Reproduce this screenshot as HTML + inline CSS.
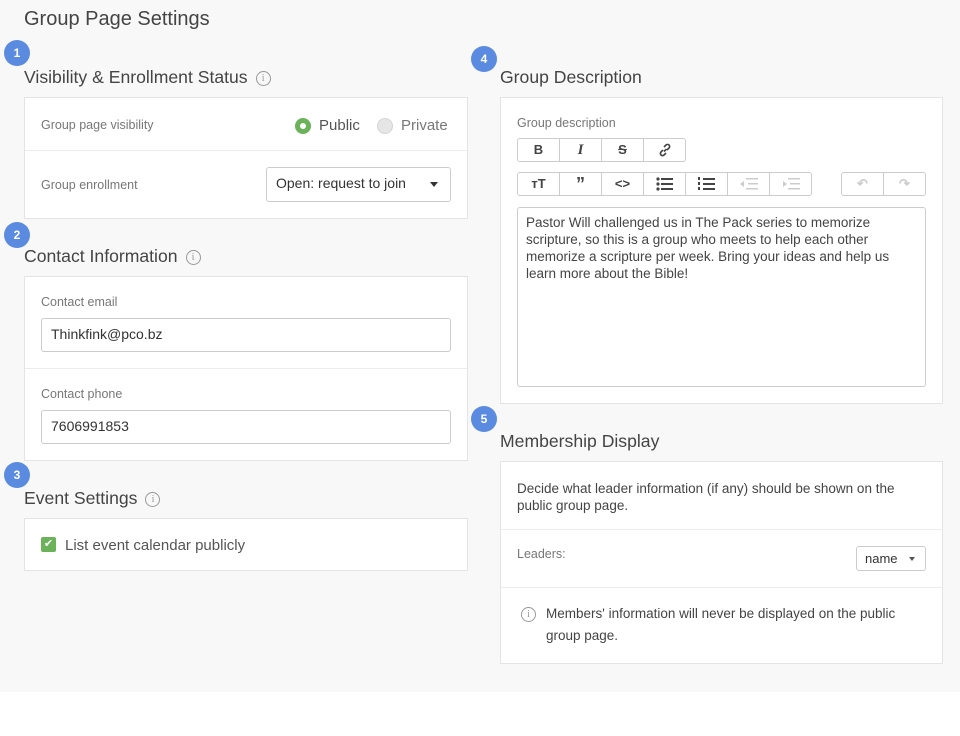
<!DOCTYPE html>
<html><head><style>
*{box-sizing:border-box;margin:0;padding:0}
body{width:960px;height:736px;background:#fff;font-family:"Liberation Sans",sans-serif;color:#444;position:relative;overflow:hidden}
.bg{position:absolute;left:0;top:0;width:960px;height:692px;background:#f8f8f8}
.a{position:absolute}
.badge{position:absolute;width:26px;height:26px;border-radius:50%;background:#5b8be0;color:#fff;font-size:12px;font-weight:bold;text-align:center;line-height:26px}
h1{position:absolute;font-weight:normal;font-size:20px;color:#444}
h2{position:absolute;font-weight:normal;font-size:17.6px;color:#444;white-space:nowrap}
.info{display:inline-block;width:15px;height:15px;border:1px solid #999;border-radius:50%;font-size:10px;color:#999;text-align:center;line-height:13px;vertical-align:2px;margin-left:8px;font-family:"Liberation Serif",serif}
.card{position:absolute;background:#fff;border:1px solid #e4e4e4}
.lbl{position:absolute;font-size:12.5px;color:#777}
.hr{position:absolute;left:0;right:0;height:1px;background:#ececec}
.inp{position:absolute;border:1px solid #ccc;border-radius:3px;background:#fff;font-size:14px;color:#333;padding-left:9px;line-height:31px}
.tb{position:absolute;height:24px;border:1px solid #ccc;border-radius:3px;display:flex;background:#fff}
.tb div{width:42px;border-right:1px solid #ccc;text-align:center;font-size:13px;line-height:22px;color:#444;font-weight:bold;display:flex;align-items:center;justify-content:center}
.tb div:last-child{border-right:none;width:41px}
.txt{font-size:14px;color:#444;line-height:17px}
</style></head><body>
<div class="bg"></div>
<h1 style="left:24px;top:8px">Group Page Settings</h1>

<div class="badge" style="left:4px;top:40px">1</div>
<h2 style="left:24px;top:67px">Visibility &amp; Enrollment Status<span class="info">i</span></h2>
<div class="card" style="left:24px;top:97px;width:444px;height:122px">
  <div class="lbl" style="left:16px;top:20px">Group page visibility</div>
  <div class="a" style="left:270px;top:20px;width:16px;height:16px;border-radius:50%;background:#6bb25a"><div class="a" style="left:5px;top:5px;width:6px;height:6px;border-radius:50%;background:#fff"></div></div>
  <div class="a txt" style="left:294px;top:19px;font-size:15px;color:#555">Public</div>
  <div class="a" style="left:352px;top:20px;width:16px;height:16px;border-radius:50%;background:#e6e6e6;border:1px solid #d4d4d4"></div>
  <div class="a txt" style="left:376px;top:19px;font-size:15px;color:#777">Private</div>
  <div class="hr" style="top:52px"></div>
  <div class="lbl" style="left:16px;top:80px">Group enrollment</div>
  <div class="inp" style="left:241px;top:69px;width:185px;height:35px;font-size:14px">Open: request to join<span class="a" style="right:12px;top:14px;border:4px solid transparent;border-top:5px solid #333;border-bottom:0"></span></div>
</div>

<div class="badge" style="left:4px;top:222px">2</div>
<h2 style="left:24px;top:246px">Contact Information<span class="info">i</span></h2>
<div class="card" style="left:24px;top:276px;width:444px;height:185px">
  <div class="lbl" style="left:16px;top:18px">Contact email</div>
  <div class="inp" style="left:16px;top:41px;width:410px;height:34px">Thinkfink@pco.bz</div>
  <div class="hr" style="top:91px"></div>
  <div class="lbl" style="left:16px;top:110px">Contact phone</div>
  <div class="inp" style="left:16px;top:133px;width:410px;height:34px">7606991853</div>
</div>

<div class="badge" style="left:4px;top:462px">3</div>
<h2 style="left:24px;top:488px">Event Settings<span class="info">i</span></h2>
<div class="card" style="left:24px;top:518px;width:444px;height:53px">
  <div class="a" style="left:16px;top:18px;width:15px;height:15px;border-radius:2px;background:#6bb25a;color:#fff;font-size:11px;text-align:center;line-height:15px">✔</div>
  <div class="a txt" style="left:40px;top:18px;font-size:15px;color:#555">List event calendar publicly</div>
</div>

<div class="badge" style="left:471px;top:46px">4</div>
<h2 style="left:500px;top:67px">Group Description</h2>
<div class="card" style="left:500px;top:97px;width:443px;height:307px">
  <div class="lbl" style="left:16px;top:18px">Group description</div>
  <div class="tb" style="left:16px;top:40px"><div>B</div><div style="font-style:italic;font-family:'Liberation Serif',serif;font-size:15px">I</div><div style="text-decoration:line-through">S</div><div><svg width="16" height="16" viewBox="0 0 16 16" fill="none" stroke="#444" stroke-width="1.6"><path d="M7 9.5l2.5-2.5M6 8L4 10a2 2 0 003 3l2-2M10 8l2-2a2 2 0 00-3-3L7 5"/></svg></div></div>
  <div class="tb" style="left:16px;top:74px"><div>тT</div><div style="font-size:18px;line-height:26px">”</div><div>&lt;&gt;</div>
   <div><svg width="18" height="14" viewBox="0 0 18 14"><g fill="#444"><circle cx="2" cy="2" r="1.6"/><circle cx="2" cy="7" r="1.6"/><circle cx="2" cy="12" r="1.6"/><rect x="5" y="1" width="12" height="2"/><rect x="5" y="6" width="12" height="2"/><rect x="5" y="11" width="12" height="2"/></g></svg></div>
   <div><svg width="18" height="14" viewBox="0 0 18 14"><g fill="#444"><rect x="0" y="0" width="2" height="3"/><rect x="0" y="5" width="2" height="3"/><rect x="0" y="10" width="2" height="3"/><rect x="5" y="1" width="12" height="2"/><rect x="5" y="6" width="12" height="2"/><rect x="5" y="11" width="12" height="2"/></g></svg></div>
   <div><svg width="18" height="14" viewBox="0 0 18 14"><g fill="#ccc"><rect x="6" y="1" width="12" height="1.5"/><rect x="8" y="6" width="10" height="1.5"/><rect x="6" y="11" width="12" height="1.5"/><path d="M0 7l4-3v6z"/></g></svg></div>
   <div><svg width="18" height="14" viewBox="0 0 18 14"><g fill="#ccc"><rect x="6" y="1" width="12" height="1.5"/><rect x="8" y="6" width="10" height="1.5"/><rect x="6" y="11" width="12" height="1.5"/><path d="M5 7l-4-3v6z"/></g></svg></div></div>
  <div class="tb" style="left:340px;top:74px"><div style="color:#ccc">↶</div><div style="color:#ccc">↷</div></div>
  <div class="a txt" style="left:16px;top:109px;width:409px;height:180px;border:1px solid #ccc;border-radius:3px;padding:6px 8px;font-size:13.5px">Pastor Will challenged us in The Pack series to memorize scripture, so this is a group who meets to help each other memorize a scripture per week. Bring your ideas and help us learn more about the Bible!</div>
</div>

<div class="badge" style="left:471px;top:406px">5</div>
<h2 style="left:500px;top:431px">Membership Display</h2>
<div class="card" style="left:500px;top:461px;width:443px;height:203px">
  <div class="a txt" style="left:16px;top:18px;width:410px;font-size:13.5px">Decide what leader information (if any) should be shown on the public group page.</div>
  <div class="hr" style="top:67px"></div>
  <div class="lbl" style="left:16px;top:85px">Leaders:</div>
  <div class="inp" style="left:355px;top:84px;width:70px;height:25px;line-height:23px;font-size:13px;padding-left:8px">name<span class="a" style="right:10px;top:10px;border:3px solid transparent;border-top:4px solid #555;border-bottom:0"></span></div>
  <div class="hr" style="top:125px"></div>
  <span class="info a" style="left:20px;top:145px;margin:0">i</span>
  <div class="a txt" style="left:45px;top:141px;width:380px;font-size:13.5px;line-height:22px">Members' information will never be displayed on the public group page.</div>
</div>
</body></html>
